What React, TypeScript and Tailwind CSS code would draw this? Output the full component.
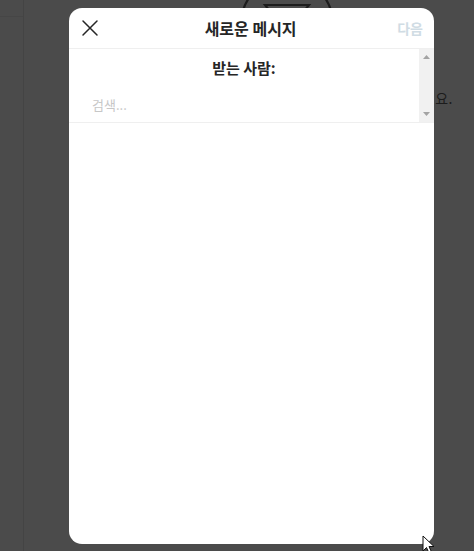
import { useState } from "react"

const font = { fontFamily: '"Noto Sans CJK KR", "Noto Sans", sans-serif' }

function CloseIcon() {
  return (
    <svg width="18" height="18" viewBox="0 0 18 18" fill="none" stroke="#262626" strokeWidth="1.5" strokeLinecap="round">
      <path d="M2 2 L16 16 M16 2 L2 16" />
    </svg>
  )
}

function Scrollbar() {
  return (
    <div className="flex w-[15px] shrink-0 flex-col items-center justify-between bg-[#f1f1f1] py-[6px]">
      <svg width="7" height="4" viewBox="0 0 7 4">
        <path d="M0 4 L3.5 0 L7 4 Z" fill="#a3a3a3" />
      </svg>
      <svg width="7" height="4" viewBox="0 0 7 4">
        <path d="M0 0 L3.5 4 L7 0 Z" fill="#a3a3a3" />
      </svg>
    </div>
  )
}

function Cursor() {
  return (
    <svg className="absolute left-[422px] top-[535px]" width="14" height="20" viewBox="0 0 14 20">
      <path d="M1 1 L1 16 L4.5 12.5 L7 18 L9.5 17 L7 11.5 L12 11.5 Z" fill="#fff" stroke="#111" strokeWidth="1" strokeLinejoin="round" />
    </svg>
  )
}

function BackgroundPage() {
  return (
    <div className="flex h-full">
      <div className="w-[24px] shrink-0 border-r border-[#444444]">
        <div className="h-[17px] border-b border-[#464646]" />
      </div>
      <div className="flex w-[526px] shrink-0 flex-col items-center">
        <svg className="-mt-[26px]" width="100" height="100" viewBox="0 0 100 100" fill="none" stroke="#1c1c1c" strokeWidth="2.2">
          <circle cx="50" cy="50" r="46" />
          <path d="M28 31 L72 31 L68 36 L32 36 Z" fill="none" />
        </svg>
        <p className="mt-[16px] ml-[26px] whitespace-nowrap text-[14px] leading-[16px] tracking-[0.6px] text-[#1c1c1c]">
          친구나 그룹에 비공개 사진과 메시지를 보내보세요.
        </p>
      </div>
    </div>
  )
}

export default function App() {
  const [query, setQuery] = useState("")

  return (
    <div className="relative h-[551px] w-full overflow-hidden bg-[#4b4b4b]" style={font}>
      <BackgroundPage />

      <div className="absolute inset-0 pl-[69px] pt-[8px]">
        <div className="flex h-[536px] w-[365px] flex-col overflow-hidden rounded-[13px] bg-white">
          <div className="flex h-[41px] shrink-0 items-center justify-between border-b border-[#efefef] px-[11px]">
            <button className="flex h-[20px] w-[20px] items-center justify-center">
              <CloseIcon />
            </button>
            <h1 className="pl-[4px] text-[16px] font-semibold text-[#262626]">새로운 메시지</h1>
            <button className="text-[14px] font-semibold text-[#d0dce4]">다음</button>
          </div>

          <div className="flex h-[74px] shrink-0 border-b border-[#efefef]">
            <div className="flex flex-1 flex-col">
              <p className="pt-[9px] text-center text-[15px] leading-[20px] font-semibold text-[#262626]">받는 사람:</p>
              <input
                value={query}
                onChange={(e) => setQuery(e.target.value)}
                placeholder="검색..."
                className="mt-[16px] h-[20px] px-[23px] text-[13px] text-[#262626] outline-none placeholder:text-[#c7c7c7]"
              />
            </div>
            <Scrollbar />
          </div>

          <div className="flex-1" />
        </div>
      </div>

      <Cursor />
    </div>
  )
}
